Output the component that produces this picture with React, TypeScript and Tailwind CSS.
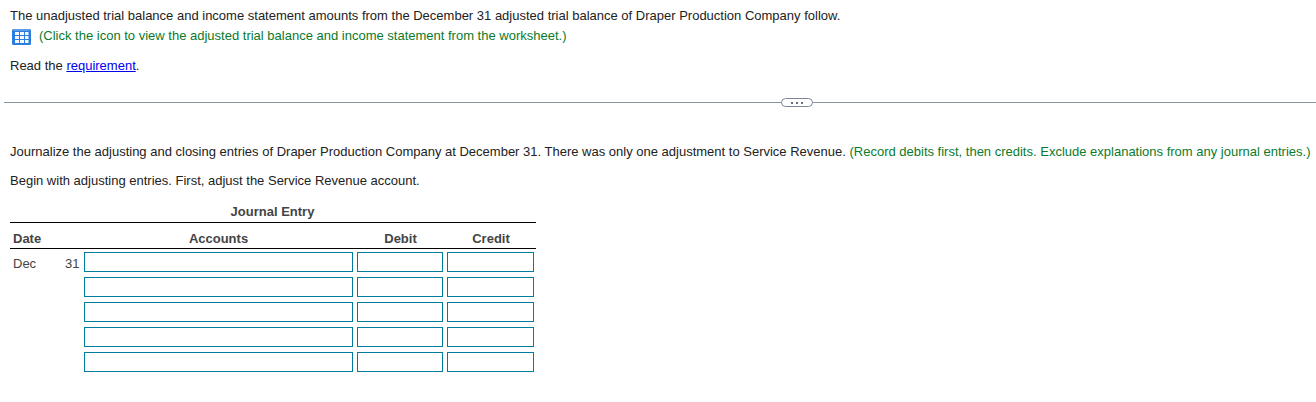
const rows = ['Dec', '', '', '', ''];

function TableIcon() {
  return (
    <svg width="19" height="16" viewBox="0 0 19 16" className="mt-[2px] shrink-0">
      <rect x="0" y="0" width="19" height="16" rx="1.5" fill="#2b7de0" />
      <rect x="1.5" y="0.5" width="16" height="1" fill="#8fbdf0" />
      <g fill="#f4f9ff">
        <rect x="3" y="3" width="4" height="3" />
        <rect x="8" y="3" width="4" height="3" />
        <rect x="13" y="3" width="3.5" height="3" />
        <rect x="3" y="7" width="4" height="3" />
        <rect x="8" y="7" width="4" height="3" />
        <rect x="13" y="7" width="3.5" height="3" />
        <rect x="3" y="11" width="4" height="3" />
        <rect x="8" y="11" width="4" height="3" />
        <rect x="13" y="11" width="3.5" height="3" />
      </g>
    </svg>
  );
}

export default function App() {
  return (
    <div className="w-[1316px] h-[402px] overflow-hidden bg-white text-[13px] leading-[20px] text-[#222] font-['Liberation_Sans',Arial,sans-serif]">
      <div className="pl-[10px] pt-[6px]">
        <p>The unadjusted trial balance and income statement amounts from the December 31 adjusted trial balance of Draper Production Company follow.</p>
        <div className="flex items-center gap-[8px] pl-[2px]">
          <TableIcon />
          <span className="text-[#0b7a2b]">(Click the icon to view the adjusted trial balance and income statement from the worksheet.)</span>
        </div>
        <p className="mt-[10px]">
          Read the <a href="#" className="text-[#0000ee] underline">requirement</a>.
        </p>
      </div>

      <div className="relative mt-[26px] ml-[4px] h-px bg-[#8a93a3]">
        <div className="absolute left-[777px] top-[-4px] flex h-[9px] w-[32px] items-center justify-center gap-[3px] rounded-full border border-[#7b8797] bg-white">
          <span className="size-[2px] bg-[#66707f]" />
          <span className="size-[2px] bg-[#66707f]" />
          <span className="size-[2px] bg-[#66707f]" />
        </div>
      </div>

      <div className="pl-[10px]">
        <p className="mt-[39px] whitespace-nowrap">
          Journalize the adjusting and closing entries of Draper Production Company at December 31. There was only one adjustment to Service Revenue.{' '}
          <span className="text-[#0b7a2b]">(Record debits first, then credits. Exclude explanations from any journal entries.)</span>
        </p>
        <p className="mt-[9px]">Begin with adjusting entries. First, adjust the Service Revenue account.</p>

        <div className="mt-[12px] w-[526px] text-[#444]">
          <div className="h-[20px] border-b border-black pr-[1px] text-center font-bold leading-[18px]">Journal Entry</div>
          <div className="flex h-[26px] items-end border-b border-black font-bold leading-[18px]">
            <span className="w-[74px] pl-[3px]">Date</span>
            <span className="w-[269px] text-center">Accounts</span>
            <span className="w-[93px] pl-[2px] text-center">Debit</span>
            <span className="w-[90px] text-center">Credit</span>
          </div>
          <div className="mt-[3px] flex flex-col gap-[5px]">
            {rows.map((month, i) => (
              <div key={i} className="flex h-[20px] items-center">
                <span className="w-[55px] pl-[3px] pt-[4px]">{month}</span>
                <span className="w-[14px] pt-[4px] text-right">{month ? '31' : ''}</span>
                <span className="ml-[5px] h-[20px] w-[269px] border-[1.5px] border-[#007c9c]" />
                <span className="ml-[4px] h-[20px] w-[86px] border-[1.5px] border-[#007c9c]" />
                <span className="ml-[4px] h-[20px] w-[87px] border-[1.5px] border-[#007c9c]" />
              </div>
            ))}
          </div>
        </div>
      </div>
    </div>
  );
}
